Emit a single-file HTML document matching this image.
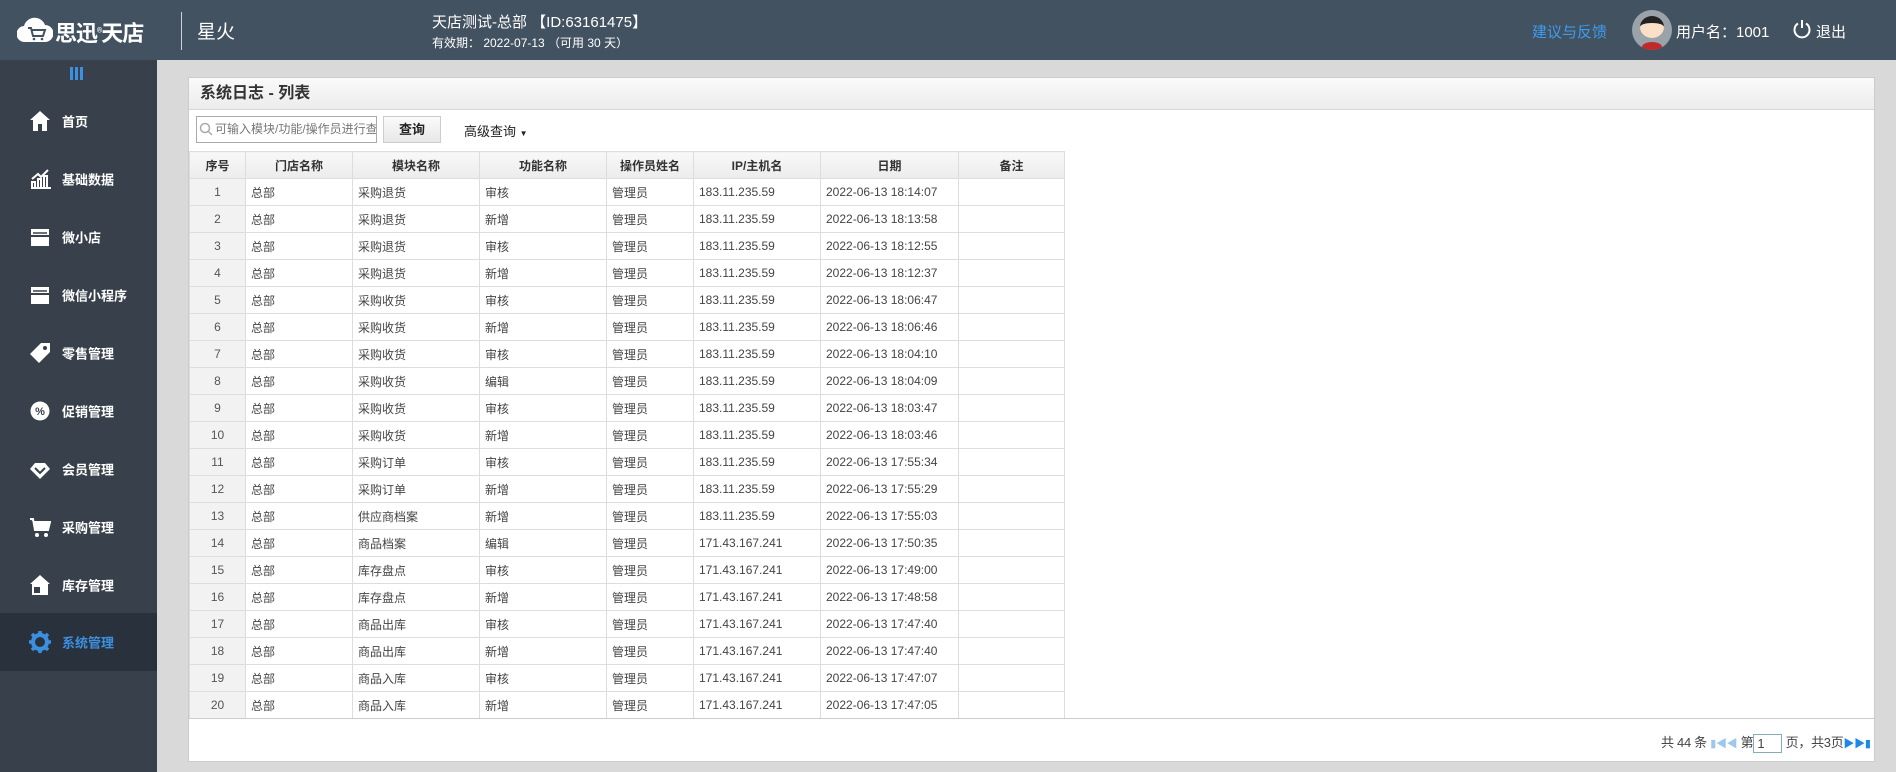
<!DOCTYPE html>
<html><head><meta charset="utf-8"><style>
*{margin:0;padding:0;box-sizing:border-box}
body{width:1896px;height:772px;overflow:hidden;background:#d9d9d9;font-family:"Liberation Sans","Noto Sans CJK SC",sans-serif;position:relative}
.hdr{position:absolute;left:0;top:0;width:1896px;height:60px;background:#435261}
.sb{position:absolute;left:0;top:60px;width:157px;height:712px;background:#38414b}
.mi{position:absolute;left:0;width:157px;height:58px;color:#fff;font-weight:bold;font-size:13px}
.mi span{position:absolute;left:62px;top:50%;transform:translateY(-50%)}
.mi svg{position:absolute;left:29px;top:50%;transform:translateY(-50%)}
.panel{position:absolute;left:188px;top:77px;width:1687px;height:685px;background:#fff;border:1px solid #ccc}
.ttl{height:32px;background:linear-gradient(#fafafa,#ececec);border-bottom:1px solid #d6d6d6;font-size:16px;font-weight:bold;color:#333;line-height:31px;padding-left:11px}
table{position:absolute;left:0;top:73px;border-collapse:collapse;font-size:12px;color:#444}
td,th{border:1px solid #ddd;height:27px;padding:0 5px;white-space:nowrap}
th{background:linear-gradient(#f8f8f8,#ececec);font-weight:bold;color:#333}
td.n{text-align:center;background:#f2f2f2;color:#555}
</style></head><body>
<div class="hdr">
 <svg style="position:absolute;left:17px;top:16px" width="36" height="28" viewBox="0 0 36 28"><path d="M8 26 A8 8 0 0 1 7 10 A11 11 0 0 1 28 9 A8.5 8.5 0 0 1 28 26Z" fill="#fff"/><path d="M11 12h3l2 8h10l2-6H15" stroke="#435261" stroke-width="2" fill="none"/><circle cx="17" cy="23" r="1.3" fill="#435261"/><circle cx="25" cy="23" r="1.3" fill="#435261"/></svg>
 <div style="position:absolute;left:55px;top:16px;color:#fff;font-size:22px;font-weight:bold;letter-spacing:-1px">思迅<sup style="font-size:7px">®</sup>天店</div>
 <div style="position:absolute;left:181px;top:12px;width:1px;height:38px;background:#cfd5db"></div>
 <div style="position:absolute;left:197px;top:17px;color:#fff;font-size:19px">星火</div>
 <div style="position:absolute;left:432px;top:11px;color:#fff;font-size:15px">天店测试-总部 【ID:63161475】</div>
 <div style="position:absolute;left:432px;top:34px;color:#fff;font-size:12px">有效期： 2022-07-13 （可用 30 天）</div>
 <div style="position:absolute;left:1532px;top:21px;color:#3d9cf0;font-size:15px">建议与反馈</div>
 <div style="position:absolute;left:1632px;top:10px;width:40px;height:40px;border-radius:50%;background:#9aa3aa;overflow:hidden"><div style="position:absolute;left:8px;top:6px;width:24px;height:22px;border-radius:50%;background:#fbe0c8;border-top:7px solid #222"></div><div style="position:absolute;left:10px;top:32px;width:20px;height:10px;border-radius:50% 50% 0 0;background:#c02a2a"></div></div>
 <div style="position:absolute;left:1676px;top:21px;color:#fff;font-size:15px">用户名：1001</div>
 <svg style="position:absolute;left:1792px;top:19px" width="20" height="20" viewBox="0 0 20 20"><path d="M6 4.5A7.5 7.5 0 1 0 14 4.5" stroke="#fff" stroke-width="2" fill="none"/><path d="M10 1v8" stroke="#fff" stroke-width="2"/></svg>
 <div style="position:absolute;left:1816px;top:21px;color:#fff;font-size:15px">退出</div>
</div>
<div class="sb">
 <div style="position:absolute;left:70px;top:7px;width:3px;height:13px;background:#3d8fe0;box-shadow:5px 0 #3d8fe0,10px 0 #3d8fe0"></div>
 <div class="mi" style="top:32px"><svg width="22" height="22" viewBox="0 0 22 22"><path d="M11 1L1 10h3v11h14V10h3z" fill="#fff"/><rect x="9" y="14" width="4" height="7" fill="#38414b"/></svg><span>首页</span></div>
 <div class="mi" style="top:90px"><svg width="22" height="22" viewBox="0 0 22 22"><path d="M2 20h20M3 19v-5h3v5M9 19v-8h3v8M15 19V8h3v11M3 11l6-5 3 3 7-7" stroke="#fff" stroke-width="2" fill="none"/></svg><span>基础数据</span></div>
 <div class="mi" style="top:148px"><svg width="22" height="22" viewBox="0 0 22 22"><path d="M2 3h18v6H2zM2 11h18v9H2z" fill="#fff"/><path d="M4 7h14" stroke="#38414b" stroke-width="1.5"/></svg><span>微小店</span></div>
 <div class="mi" style="top:206px"><svg width="22" height="22" viewBox="0 0 22 22"><path d="M2 3h18v6H2zM2 11h18v9H2z" fill="#fff"/><path d="M4 7h14" stroke="#38414b" stroke-width="1.5"/></svg><span>微信小程序</span></div>
 <div class="mi" style="top:264px"><svg width="22" height="22" viewBox="0 0 22 22"><path d="M12 1h9v9L10 21 1 12z" fill="#fff"/><circle cx="16" cy="6" r="2" fill="#38414b"/></svg><span>零售管理</span></div>
 <div class="mi" style="top:322px"><svg width="22" height="22" viewBox="0 0 22 22"><circle cx="11" cy="11" r="9.5" fill="#fff"/><text x="11" y="15" text-anchor="middle" font-size="11" font-weight="bold" fill="#38414b">%</text></svg><span>促销管理</span></div>
 <div class="mi" style="top:380px"><svg width="22" height="22" viewBox="0 0 22 22"><path d="M11 21L1 11l5-6h10l5 6z" fill="#fff"/><path d="M6 10l5 5 5-5" stroke="#38414b" stroke-width="2" fill="none"/></svg><span>会员管理</span></div>
 <div class="mi" style="top:438px"><svg width="22" height="22" viewBox="0 0 22 22"><path d="M1 3h3l2 11h13l2-8H5" fill="#fff" stroke="#fff" stroke-width="2"/><circle cx="8" cy="19" r="2" fill="#fff"/><circle cx="17" cy="19" r="2" fill="#fff"/></svg><span>采购管理</span></div>
 <div class="mi" style="top:496px"><svg width="22" height="22" viewBox="0 0 22 22"><path d="M11 1L1 10h2v11h16V10h2z" fill="#fff"/><rect x="5" y="13" width="6" height="6" fill="#38414b"/></svg><span>库存管理</span></div>
 <div class="mi" style="top:553px;background:#29323c;color:#3d8fe0"><svg width="22" height="22" viewBox="0 0 22 22"><circle cx="11" cy="11" r="7" fill="none" stroke="#3d8fe0" stroke-width="4"/><path d="M11 0v5M11 17v5M0 11h5M17 11h5M3 3l4 4M15 15l4 4M19 3l-4 4M7 15l-4 4" stroke="#3d8fe0" stroke-width="3.5"/></svg><span>系统管理</span></div>
</div>
<div class="panel">
 <div class="ttl">系统日志 - 列表</div>
 <div style="position:absolute;left:7px;top:38px;width:181px;height:27px;border:1px solid #aaa;font-size:12px;color:#777;line-height:25px;padding-left:18px;overflow:hidden;white-space:nowrap">可输入模块/功能/操作员进行查</div>
 <svg style="position:absolute;left:10px;top:44px" width="14" height="14" viewBox="0 0 14 14"><circle cx="6" cy="6" r="4.5" stroke="#aaa" stroke-width="1.5" fill="none"/><path d="M9.5 9.5L13 13" stroke="#aaa" stroke-width="1.5"/></svg>
 <div style="position:absolute;left:194px;top:38px;width:58px;height:27px;border:1px solid #ccc;background:linear-gradient(#fafafa,#e8e8e8);font-size:13px;font-weight:bold;text-align:center;line-height:25px;color:#222">查询</div>
 <div style="position:absolute;left:275px;top:43px;font-size:13px;color:#222">高级查询 <span style="font-size:8px">▼</span></div>
 <table>
 <tr><th style="width:56px">序号</th><th style="width:107px">门店名称</th><th style="width:127px">模块名称</th><th style="width:127px">功能名称</th><th style="width:87px">操作员姓名</th><th style="width:127px">IP/主机名</th><th style="width:138px">日期</th><th style="width:106px">备注</th></tr>
 <tr><td class="n">1</td><td>总部</td><td>采购退货</td><td>审核</td><td>管理员</td><td>183.11.235.59</td><td>2022-06-13 18:14:07</td><td></td></tr>
 <tr><td class="n">2</td><td>总部</td><td>采购退货</td><td>新增</td><td>管理员</td><td>183.11.235.59</td><td>2022-06-13 18:13:58</td><td></td></tr>
 <tr><td class="n">3</td><td>总部</td><td>采购退货</td><td>审核</td><td>管理员</td><td>183.11.235.59</td><td>2022-06-13 18:12:55</td><td></td></tr>
 <tr><td class="n">4</td><td>总部</td><td>采购退货</td><td>新增</td><td>管理员</td><td>183.11.235.59</td><td>2022-06-13 18:12:37</td><td></td></tr>
 <tr><td class="n">5</td><td>总部</td><td>采购收货</td><td>审核</td><td>管理员</td><td>183.11.235.59</td><td>2022-06-13 18:06:47</td><td></td></tr>
 <tr><td class="n">6</td><td>总部</td><td>采购收货</td><td>新增</td><td>管理员</td><td>183.11.235.59</td><td>2022-06-13 18:06:46</td><td></td></tr>
 <tr><td class="n">7</td><td>总部</td><td>采购收货</td><td>审核</td><td>管理员</td><td>183.11.235.59</td><td>2022-06-13 18:04:10</td><td></td></tr>
 <tr><td class="n">8</td><td>总部</td><td>采购收货</td><td>编辑</td><td>管理员</td><td>183.11.235.59</td><td>2022-06-13 18:04:09</td><td></td></tr>
 <tr><td class="n">9</td><td>总部</td><td>采购收货</td><td>审核</td><td>管理员</td><td>183.11.235.59</td><td>2022-06-13 18:03:47</td><td></td></tr>
 <tr><td class="n">10</td><td>总部</td><td>采购收货</td><td>新增</td><td>管理员</td><td>183.11.235.59</td><td>2022-06-13 18:03:46</td><td></td></tr>
 <tr><td class="n">11</td><td>总部</td><td>采购订单</td><td>审核</td><td>管理员</td><td>183.11.235.59</td><td>2022-06-13 17:55:34</td><td></td></tr>
 <tr><td class="n">12</td><td>总部</td><td>采购订单</td><td>新增</td><td>管理员</td><td>183.11.235.59</td><td>2022-06-13 17:55:29</td><td></td></tr>
 <tr><td class="n">13</td><td>总部</td><td>供应商档案</td><td>新增</td><td>管理员</td><td>183.11.235.59</td><td>2022-06-13 17:55:03</td><td></td></tr>
 <tr><td class="n">14</td><td>总部</td><td>商品档案</td><td>编辑</td><td>管理员</td><td>171.43.167.241</td><td>2022-06-13 17:50:35</td><td></td></tr>
 <tr><td class="n">15</td><td>总部</td><td>库存盘点</td><td>审核</td><td>管理员</td><td>171.43.167.241</td><td>2022-06-13 17:49:00</td><td></td></tr>
 <tr><td class="n">16</td><td>总部</td><td>库存盘点</td><td>新增</td><td>管理员</td><td>171.43.167.241</td><td>2022-06-13 17:48:58</td><td></td></tr>
 <tr><td class="n">17</td><td>总部</td><td>商品出库</td><td>审核</td><td>管理员</td><td>171.43.167.241</td><td>2022-06-13 17:47:40</td><td></td></tr>
 <tr><td class="n">18</td><td>总部</td><td>商品出库</td><td>新增</td><td>管理员</td><td>171.43.167.241</td><td>2022-06-13 17:47:40</td><td></td></tr>
 <tr><td class="n">19</td><td>总部</td><td>商品入库</td><td>审核</td><td>管理员</td><td>171.43.167.241</td><td>2022-06-13 17:47:07</td><td></td></tr>
 <tr><td class="n">20</td><td>总部</td><td>商品入库</td><td>新增</td><td>管理员</td><td>171.43.167.241</td><td>2022-06-13 17:47:05</td><td></td></tr>
 </table>
 <div style="position:absolute;left:0;top:640px;width:1685px;height:1px;background:#ccc"></div>
 <div style="position:absolute;left:1472px;top:654px;font-size:13px;color:#444;white-space:nowrap;letter-spacing:-0.3px">共 44 条 <span style="color:#9cc8ef;font-size:11px">▮◀◀</span> 第<span style="display:inline-block;width:29px;height:19px;border:1px solid #8ab;vertical-align:middle;padding-left:3px;line-height:17px">1</span> 页，共3页<span style="color:#1e88e5;font-size:11px">▶▶▮</span></div>
</div>
</body></html>
